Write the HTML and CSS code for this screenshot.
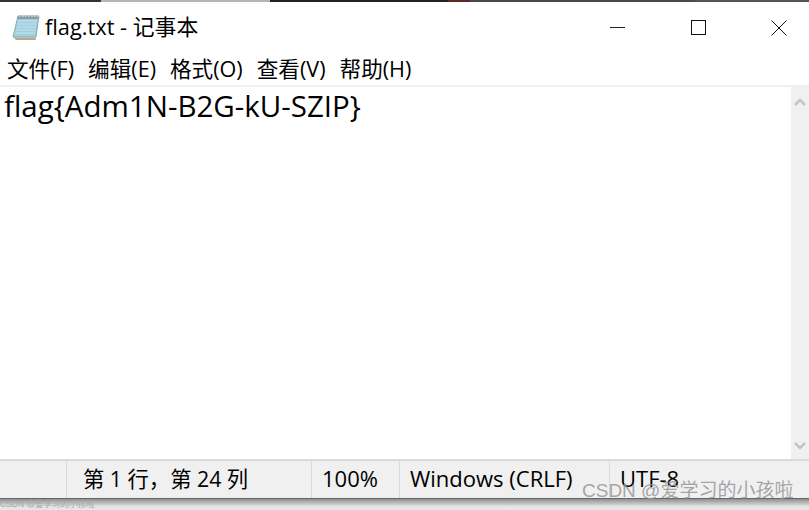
FILE: index.html
```html
<!DOCTYPE html>
<html lang="zh-CN">
<head>
<meta charset="utf-8">
<title>flag.txt - 记事本</title>
<link rel="stylesheet" href="styles.css">
</head>
<body>
<div class="page">
  <div class="topstrip"><i class="s1"></i><i class="s2"></i><i class="s3"></i><i class="s4"></i><i class="s5"></i><i class="s6"></i></div>
  <header class="titlebar">
    <svg class="appicon" width="28" height="28" viewBox="0 0 28 28">
      <path d="M6 3H27L24 24H1Z" fill="#9fd0e0" stroke="#8aa9b5" stroke-width="1"/>
      <path d="M5.500 8H25M5 11H24.500M4.500 14H24M4 17H23.500M3.500 20H23" stroke="#c4e4ee" stroke-width="1.200"/>
      <path d="M1.500 24.500H24L23.500 27H4Z" fill="#b5a98e"/>
      <path d="M6 2.500H27L26.500 6H5.500Z" fill="#8d9ba3"/>
      <path d="M8 1.500V4M11 1.500V4M14 1.500V4M17 1.500V4M20 1.500V4M23 1.500V4M26 1.500V4" stroke="#e8edef" stroke-width="1"/>
    </svg>
    <span class="title">flag.txt - 记事本</span>
    <div class="winbtns">
      <svg width="16" height="16" viewBox="0 0 16 16"><path d="M1 7.500H16" stroke="#222" stroke-width="1"/></svg>
      <svg width="16" height="16" viewBox="0 0 16 16"><rect x="1.500" y="0.500" width="14" height="14" fill="none" stroke="#111" stroke-width="1"/></svg>
      <svg width="16" height="16" viewBox="0 0 16 16"><path d="M0.500 0.500L15.500 15.500M15.500 0.500L0.500 15.500" stroke="#111" stroke-width="1"/></svg>
    </div>
  </header>
  <nav class="menubar">
    <span>文件(F)</span><span>编辑(E)</span><span>格式(O)</span><span>查看(V)</span><span>帮助(H)</span>
  </nav>
  <main class="editor">
    <div class="text">flag{Adm1N-B2G-kU-SZIP}</div>
    <aside class="scrollbar">
      <svg width="12" height="8" viewBox="0 0 12 8"><path d="M1 7L6 2L11 7" fill="none" stroke="#c4c4c4" stroke-width="2.500"/></svg>
      <svg width="12" height="8" viewBox="0 0 12 8"><path d="M1 1L6 6L11 1" fill="none" stroke="#c4c4c4" stroke-width="2.500"/></svg>
    </aside>
  </main>
  <footer class="statusbar">
    <span class="cell c0"></span>
    <span class="cell c1">第 1 行，第 24 列</span>
    <span class="cell c2">100%</span>
    <span class="cell c3">Windows (CRLF)</span>
    <span class="cell c4">UTF-8</span>
  </footer>
  <div class="under"><span class="tinymark">CSDN @爱学习的小孩啦</span></div>
  <span class="watermark">CSDN @爱学习的小孩啦</span>
</div>
</body>
</html>
```

FILE: styles.css
```css
* { box-sizing: border-box; }
html, body { margin: 0; padding: 0; }
body {
  width: 809px;
  height: 510px;
  overflow: hidden;
  background: #fff;
  font-family: "Open Sans", "Noto Sans CJK SC", sans-serif;
  color: #000;
}
.page {
  position: relative;
  width: 809px;
  height: 510px;
  display: flex;
  flex-direction: column;
}
.topstrip { display: flex; height: 2px; flex: none; background: #444; }
.topstrip i { display: block; height: 100%; }
.s1 { width: 101px; background: #333; }
.s2 { width: 169px; background: #b5b5b5; }
.s3 { width: 178px; background: #222; }
.s4 { width: 22px; background: #5a2a2a; }
.s5 { width: 225px; background: #4a4a4a; }
.s6 { flex: 1; background: #555; }
.titlebar {
  flex: none;
  height: 50px;
  display: flex;
  align-items: center;
  padding-left: 12px;
}
.appicon { flex: none; margin-right: 5px; }
.title { font-size: 21.800px; line-height: 28px; }
.winbtns {
  margin-left: auto;
  display: flex;
  align-items: center;
  gap: 65px;
  padding: 2px 22px 0 0;
}
.winbtns svg { display: block; }
.menubar {
  flex: none;
  height: 35px;
  display: flex;
  align-items: center;
  gap: 14px;
  padding: 0 0 3px 7px;
  font-size: 21.600px;
  border-bottom: 2px solid #f0f0f0;
}
.editor { flex: 1; display: flex; min-height: 0; }
.text {
  flex: 1;
  padding: 0 0 0 4px;
  font-size: 29.500px;
  line-height: 38px;
}
.scrollbar {
  flex: none;
  width: 18px;
  background: #f0f0f0;
  display: flex;
  flex-direction: column;
  justify-content: space-between;
  align-items: center;
  padding: 11px 0 9px;
}
.scrollbar svg { display: block; }
.statusbar {
  flex: none;
  height: 39px;
  display: flex;
  align-items: center;
  background: #f0f0f0;
  border-top: 2px solid #d9d9d9;
  font-size: 22px;
}
.cell {
  height: 100%;
  display: flex;
  align-items: center;
  padding-left: 10px;
  padding-bottom: 4px;
  border-right: 1px solid #d9d9d9;
  white-space: nowrap;
}
.c0 { width: 67px; }
.c1 { width: 245px; padding-left: 16px; font-size: 21.300px; }
.c2 { width: 88px; }
.c3 { width: 210px; }
.c4 { border-right: 0; }
.under {
  flex: none;
  height: 12px;
  background: linear-gradient(#8f8f8f, #e6e6e6 70%);
  border-top: 1px solid #666;
  overflow: hidden;
}
.tinymark {
  display: block;
  font-family: "Liberation Sans", "Noto Sans CJK SC", sans-serif;
  font-size: 8.500px;
  line-height: 11px;
  color: #aaa;
  white-space: nowrap;
}
.watermark {
  position: absolute;
  left: 582px;
  top: 479px;
  font-family: "Liberation Sans", "Noto Sans CJK SC", sans-serif;
  font-size: 19px;
  line-height: 24px;
  color: rgba(150, 150, 150, 0.85);
  white-space: nowrap;
}
```
